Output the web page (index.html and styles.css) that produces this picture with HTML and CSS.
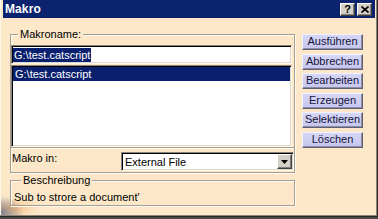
FILE: index.html
```html
<!DOCTYPE html>
<html>
<head>
<meta charset="utf-8">
<link rel="stylesheet" href="styles.css">
</head>
<body>
<div class="win">
  <div class="titlebar">
    <span class="title">Makro</span>
    <span class="tbtns">
      <span class="tbtn help">?</span>
      <span class="tbtn close"><svg width="8" height="7" viewBox="0 0 8 7"><path d="M0.5 0.5 L7.5 6.5 M7.5 0.5 L0.5 6.5" stroke="#000" stroke-width="1.7" fill="none"/></svg></span>
    </span>
  </div>
  <div class="client">
    <div class="left">
      <fieldset class="group name">
        <legend>Makroname:</legend>
        <div class="field edit"><span class="sel">G:\test.catscript</span></div>
        <div class="field list"><div class="item selected">G:\test.catscript</div></div>
      </fieldset>
      <div class="inrow">
        <span class="inlabel">Makro in:</span>
        <div class="field combo">
          <span class="ctext">External File</span>
          <span class="drop"><svg width="7" height="4" viewBox="0 0 7 4"><path d="M0 0 H7 L3.5 4 Z" fill="#000"/></svg></span>
        </div>
      </div>
      <fieldset class="group desc">
        <legend>Beschreibung</legend>
        <div class="desctext">Sub to strore a document'</div>
      </fieldset>
    </div>
    <div class="buttons">
      <div class="btn">Ausführen</div>
      <div class="btn">Abbrechen</div>
      <div class="btn">Bearbeiten</div>
      <div class="btn">Erzeugen</div>
      <div class="btn">Selektieren</div>
      <div class="btn">Löschen</div>
    </div>
  </div>
</div>
</body>
</html>
```
FILE: styles.css
```css
* { box-sizing: border-box; }
html, body { margin: 0; padding: 0; }
body {
  width: 378px;
  height: 219px;
  overflow: hidden;
  background: #4a4a4a;
  font-family: "Liberation Sans", Arial, sans-serif;
  font-size: 11px;
  color: #000;
}
.win {
  width: 378px;
  height: 217px;
  background:
    radial-gradient(ellipse 26px 10px at 14px 208px, rgba(240,150,60,0.45), rgba(240,150,60,0) 100%),
    radial-gradient(ellipse 22px 16px at 2px 212px, rgba(60,90,150,0.75), rgba(60,90,150,0) 100%),
    #fce8c9;
  border-right: 1px solid #2a2a2a;
  border-bottom: 1px solid #2a2a2a;
  box-shadow: inset -1px -1px 0 #8f8577, inset 1px 0 0 #fff6e6;
  padding: 0 2px 2px 3px;
}
.titlebar {
  height: 18px;
  background: #0c2370;
  display: flex;
  align-items: center;
  padding: 0 3px 0 2px;
}
.title {
  color: #fff;
  font-weight: bold;
  font-size: 12px;
  letter-spacing: 0.1px;
  flex: 1;
}
.tbtns { display: flex; gap: 2px; }
.tbtn {
  width: 15px;
  height: 13px;
  background: #d4d0c8;
  border: 1px solid;
  border-color: #fff #404040 #404040 #fff;
  box-shadow: inset -1px -1px 0 #808080;
  display: flex;
  align-items: center;
  justify-content: center;
  font-weight: bold;
  font-size: 11px;
  line-height: 11px;
  color: #000;
}
.client {
  display: flex;
  gap: 7px;
  padding: 10px 0 0 7px;
}
.left { width: 285px; display: flex; flex-direction: column; }
.group {
  margin: 0;
  padding: 0 2px 0 0;
  min-width: 0;
  border: 1px solid #a59e92;
  box-shadow: inset 1px 1px 0 #fffaf0, 1px 1px 0 #fffaf0;
}
.group legend {
  margin-left: 7px;
  padding: 0 2px;
  line-height: 13px;
  height: 13px;
  background: #fce8c9;
  color: #000;
}
.field {
  background: #fff;
  border: 1px solid;
  border-color: #8a8478 #fffaf0 #fffaf0 #8a8478;
  box-shadow: inset 1px 1px 0 #000, inset -1px -1px 0 #e0d8c8;
}
.edit {
  margin-top: 4px;
  height: 19px;
  padding: 2px 0 0 1px;
}
.sel {
  display: inline-block;
  background: #0a1f6e;
  color: #fff;
  line-height: 14px;
  height: 14px;
  padding: 0 1px;
}
.list {
  margin-top: 1px;
  height: 82px;
  padding: 1px 1px 0 1px;
}
.item {
  line-height: 14px;
  height: 14px;
  padding-left: 2px;
  margin-left: 0;
}
.item.selected { background: #0a1f6e; color: #fff; }
.inrow {
  height: 25px;
  display: flex;
  align-items: flex-start;
  padding: 4px 0 0 1px;
  border: 1px solid #a59e92;
  border-top: none;
  box-shadow: 1px 1px 0 #fffaf0, inset 1px 0 0 #fffaf0;
}
.inlabel { line-height: 13px; margin-top: 0; }
.combo {
  margin-left: auto;
  width: 173px;
  height: 19px;
  display: flex;
  align-items: center;
  padding: 2px 1px 2px 3px;
}
.ctext { flex: 1; }
.drop {
  width: 15px;
  height: 15px;
  background: #d4d0c8;
  border: 1px solid;
  border-color: #fff #404040 #404040 #fff;
  box-shadow: inset -1px -1px 0 #808080;
  display: flex;
  align-items: center;
  justify-content: center;
}
.desc { margin-top: 1px; padding: 4px 0 1px 3px; }
.desctext { line-height: 13px; }
.buttons {
  width: 61px;
  margin-top: 6px;
  display: flex;
  flex-direction: column;
  gap: 3.6px;
}
.btn {
  height: 16px;
  background: linear-gradient(#d6d6f6, #c6c6ee);
  border: 1px solid;
  border-color: #f2f2ff #5e5e74 #5e5e74 #f2f2ff;
  box-shadow: inset -1px -1px 0 #8c8ca6;
  text-align: center;
  line-height: 13px;
  color: #14143a;
}
```
